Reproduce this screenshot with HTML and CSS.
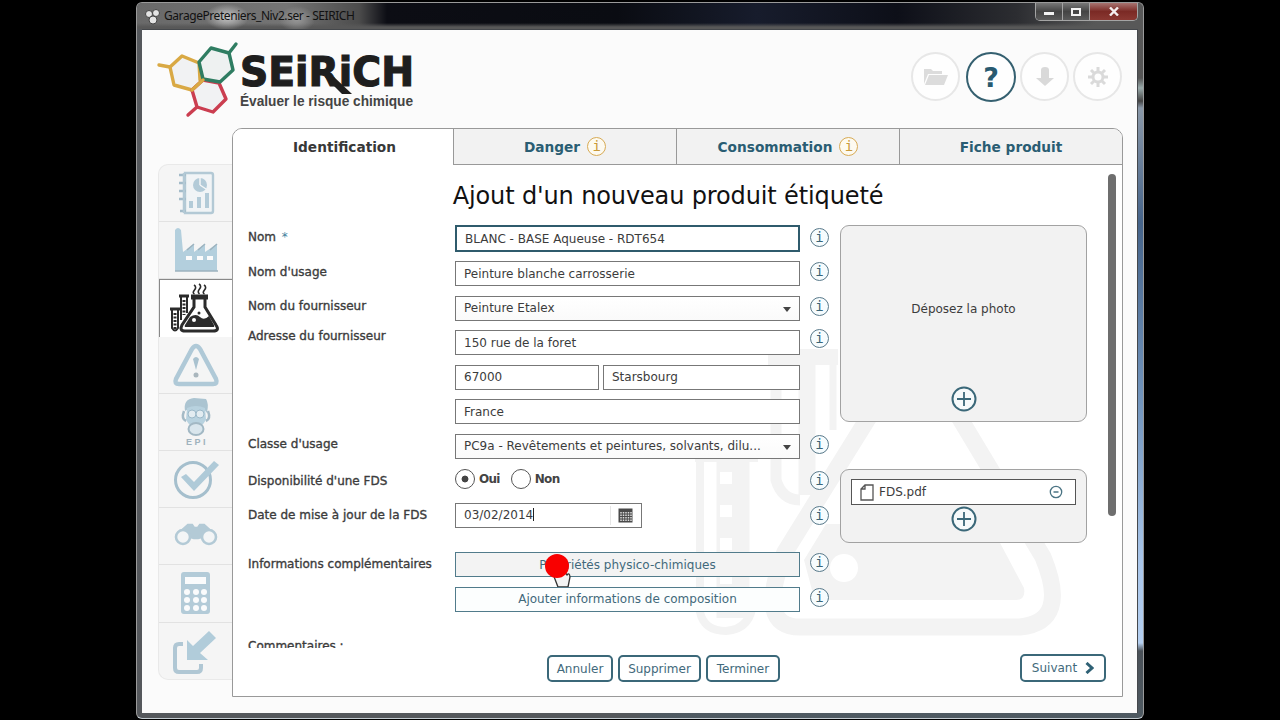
FILE: index.html
```html
<!DOCTYPE html>
<html lang="fr">
<head>
	<meta charset="UTF-8">
	<title>SEIRICH</title>
	<link rel="stylesheet" href="styles.css">
</head>
<body>

	<div class="window">
		<div class="titlebar">
			<svg class="appIcon" width="20" height="18" viewBox="0 0 20 18"><g fill="#e4e4e4" stroke="#444"><circle cx="6" cy="6" r="3.5"/><circle cx="13" cy="5" r="3.5"/><circle cx="10" cy="12" r="4"/></g></svg>
			<span class="caption">GaragePreteniers_Niv2.ser - SEIRICH</span>
			<div class="winBtns">
				<span class="min"><i></i></span>
				<span class="max"><i></i></span>
				<span class="close"><svg width="10" height="9" viewBox="0 0 10 9"><path d="M1 0.5L9 8.5M9 0.5L1 8.5" stroke="#f4eeee" stroke-width="2.4"/></svg></span>
			</div>
		</div>

		<div class="client">
			<header class="header">
				<svg class="logo" width="262" height="84" viewBox="156 38 262 84">
					<g fill="none" stroke-width="3.4" stroke-linejoin="round" stroke-linecap="round">
						<path d="M200 79L199 62L182 55L170 66L174 84L192 89L203 79" fill="#f1f2f3" stroke="#d9a944"/>
						<path d="M170 66L159 64" stroke="#d9a944"/>
						<path d="M192 89L203 79L219 82L226 98L213 111L197 106Z" fill="#f1f2f3" stroke="#cb3e50"/>
						<path d="M197 106L188 114" stroke="#cb3e50"/>
						<path d="M203 78L199 61L211 47L229 52L233 69L220 81Z" fill="#eef1f1" stroke="#2f7d62"/>
						<path d="M229 52L236 43" stroke="#2f7d62"/>
						<path d="M192 89L203 79" stroke="#d9a944"/>
					</g>
					<text class="logoName" x="240" y="84.500" textLength="174" lengthAdjust="spacingAndGlyphs">SEiRiCH</text>
					<path d="M325 76L334 76L352 93L342 93Z" fill="#1e1e1e"/>
					<text class="logoSub" x="240" y="105" textLength="173" lengthAdjust="spacingAndGlyphs">Évaluer le risque chimique</text>
				</svg>
				<div class="tools">
					<span class="tool off"><svg width="26" height="20" viewBox="0 0 26 20"><path d="M1 17V2H8L10 4H19V7H5L1 17ZM6 8H25L21 18H2Z" fill="#dcdcdc"/></svg></span>
					<span class="tool on">?</span>
					<span class="tool off"><svg width="22" height="22" viewBox="0 0 22 22"><path d="M7 4Q7 1 11 1T15 4V12H20L11 20L2 12H7Z" fill="#d9d9d9"/></svg></span>
					<span class="tool off"><svg width="22" height="22" viewBox="0 0 22 22"><g stroke="#dadada" fill="none"><circle cx="11" cy="11" r="5" stroke-width="3"/><path d="M11 1V5M11 17V21M1 11H5M17 11H21M4 4L7 7M15 15L18 18M18 4L15 7M7 15L4 18" stroke-width="3"/></g></svg></span>
				</div>
			</header>

			<div class="main">
				<ul class="side">
					<li><svg width="48" height="48" viewBox="0 0 48 48"><path d="M13 4H39Q41 4 41 6V42Q41 44 39 44H13Z" fill="#f1f4f6" stroke="#b3c9d5" stroke-width="2.400"/><path d="M7 6H14M7 14H14M7 22H14M7 30H14M8 42H14" stroke="#a3bbc9" stroke-width="2.500"/><path d="M12 4V44" stroke="#b3c9d5" stroke-width="2.500"/><circle cx="28" cy="16" r="7" fill="#b3cbd8"/><path d="M28 16V8M28 16L34 20" stroke="#f4f6f7" stroke-width="1.500"/><path d="M19 39V32M27 39V28M35 39V24" stroke="#b3cbd8" stroke-width="4"/></svg></li>
					<li><svg width="48" height="48" viewBox="0 0 48 48"><path d="M3 45V4Q6 0 9 4L11 26L22 18V26L33 18V26L45 18V45Z" fill="#b3cfdd"/><path d="M3 45H46M22 18L15 24M33 18L26 24M45 18L38 24" stroke="#9db3bf" stroke-width="1.600"/><path d="M14 30H20V34H14ZM25 30H31V34H25ZM35 30H41V34H35Z" fill="#fbfbfb"/></svg></li>
					<li class="current"><svg width="50" height="52" viewBox="0 0 50 52"><g fill="none" stroke="#2b2b2b"><path d="M24 3Q27 5 24.500 8T24.500 12M29 2Q32 4 29.500 7T29.500 12M34 3Q37 5 34.500 8T34.500 12" stroke-width="1.600"/><path d="M21 15H38" stroke-width="5"/><path d="M24 17V25L12 43Q9 49 15 49H43Q50 49 46 43L35 25V17" stroke-width="3"/><path d="M9 14H19" stroke-width="3"/><path d="M11 15V38M17 15V31" stroke-width="2"/><path d="M14 18V33" stroke-width="3" stroke-dasharray="2 1.500"/><path d="M0 27H10" stroke-width="3"/><path d="M2 28V46Q5 51 8 46V28" stroke-width="2"/><path d="M5 31V48" stroke-width="3" stroke-dasharray="2 1.500"/></g><path d="M20 35Q26 31 30 35T39 34L44 43Q45 45 43 45H16Q14 45 15 43Z" fill="#2b2b2b"/><circle cx="24" cy="38" r="2" fill="#fff"/><circle cx="29" cy="31" r="1.500" fill="#2b2b2b"/></svg></li>
					<li><svg width="48" height="48" viewBox="0 0 48 48"><path d="M24 5Q26 5 28 8L44 38Q46 43 41 43H7Q2 43 4 38L20 8Q22 5 24 5Z" fill="#f4f5f5" stroke="#afc9d7" stroke-width="4.500"/><path d="M21 18Q24 14 27 18L24 29Z" fill="#a9c2cf"/><circle cx="24" cy="34" r="2.500" fill="#a9b6bd"/></svg></li>
					<li><svg width="48" height="54" viewBox="0 0 48 54"><path d="M13 16Q11 4 22 3L34 4Q37 8 35 18L31 13H18Z" fill="#abc4d1"/><path d="M12 16Q9 24 14 26M36 16Q39 24 34 26" fill="none" stroke="#a4bac6" stroke-width="2.500"/><path d="M15 13Q24 9 33 13L34 25Q29 33 24 33T14 25Z" fill="#b8d2df"/><circle cx="20" cy="19" r="4" fill="#e2ecf1" stroke="#9cb9c9"/><circle cx="28" cy="19" r="4" fill="#e2ecf1" stroke="#9cb9c9"/><ellipse cx="24" cy="34" rx="7.500" ry="6" fill="#d9e6ed" stroke="#a2b8c4" stroke-width="2"/><text class="epi" x="14" y="50">EPI</text></svg></li>
					<li><svg width="48" height="48" viewBox="0 0 48 48"><circle cx="21" cy="25" r="17.500" fill="none" stroke="#a5bfcd" stroke-width="3"/><path d="M9 22L14 19L22 27L42 6L47 10L22 36Z" fill="#afcad8"/></svg></li>
					<li><svg width="48" height="48" viewBox="0 0 48 48"><g fill="#f3f5f6" stroke="#b3cad6" stroke-width="2.600"><path d="M6 22L16 13H20L22 16H26L28 13H32L42 22L26 26H22Z" fill="#b3cad6"/><circle cx="11" cy="25" r="7"/><circle cx="37" cy="25" r="7"/></g></svg></li>
					<li><svg width="48" height="48" viewBox="0 0 48 48"><rect x="9" y="3" width="29" height="42" rx="3" fill="#b3cbd8"/><path d="M13 8H34V15H13Z" fill="#fafbfc"/><g fill="#fafbfc"><circle cx="15" cy="23" r="3"/><circle cx="24" cy="23" r="3"/><circle cx="32" cy="23" r="3"/><circle cx="15" cy="31" r="3"/><circle cx="24" cy="31" r="3"/><circle cx="32" cy="31" r="3"/><circle cx="15" cy="39" r="3"/><circle cx="24" cy="39" r="3"/><circle cx="32" cy="39" r="3"/></g></svg></li>
					<li><svg width="48" height="48" viewBox="0 0 48 48"><path d="M11 17H7Q3 17 3 21V41Q3 45 7 45H25Q29 45 29 41V37" fill="none" stroke="#b0c7d4" stroke-width="4"/><path d="M15 13L21 19L37 4L44 11L28 26L36 33H15Z" fill="#b1ccda"/></svg></li>
				</ul>

				<div class="panel">
					<svg class="watermark" width="388" height="310" viewBox="690 340 388 310">
						<g fill="none" stroke="#f3f3f3">
							<path d="M872 412L785 552Q755 627 800 627H1020Q1070 622 1043 557L956 412" stroke-width="17"/>
							<path d="M768 357H838" stroke-width="16"/>
							<path d="M776 362V480Q782 500 800 500" stroke-width="11"/>
							<path d="M807 362V495" stroke-width="17"/>
							<path d="M833 362V430" stroke-width="7"/>
							<path d="M695 455H758" stroke-width="14"/>
							<path d="M700 458V612Q704 631 726 631Q752 629 753 600" stroke-width="8"/>
							<path d="M733 460V618" stroke-width="33"/>
							<path d="M720 478H732M720 511H732M720 544H732M720 578H732" stroke="#fff" stroke-width="12"/>
						</g>
						<path d="M826 524H990L1024 588Q1026 600 1016 600H824Q808 600 812 590L804 560Z" fill="#f3f3f3"/>
						<circle cx="844" cy="568" r="14" fill="#fff"/>
					</svg>

					<nav class="tabs">
						<a class="tab active">Identification</a>
						<a class="tab">Danger<span class="info gold">i</span></a>
						<a class="tab">Consommation<span class="info gold">i</span></a>
						<a class="tab">Fiche produit</a>
					</nav>

					<div class="scroll">
						<div class="form">
							<h1>Ajout d'un nouveau produit étiqueté</h1>
							<div class="cols">
								<div class="rows">
									<div class="row nom">
										<label>Nom <em>*</em></label>
										<input class="field focus" type="text" value="BLANC - BASE Aqueuse - RDT654">
										<span class="info">i</span>
									</div>
									<div class="row usage">
										<label>Nom d'usage</label>
										<input class="field" type="text" value="Peinture blanche carrosserie">
										<span class="info">i</span>
									</div>
									<div class="row fournisseur">
										<label>Nom du fournisseur</label>
										<div class="field select">Peinture Etalex</div>
										<span class="info">i</span>
									</div>
									<div class="row adresse">
										<label>Adresse du fournisseur</label>
										<div class="stack">
											<input class="field" type="text" value="150 rue de la foret">
											<div class="pair">
												<input class="field cp" type="text" value="67000">
												<input class="field ville" type="text" value="Starsbourg">
											</div>
											<input class="field" type="text" value="France">
										</div>
										<span class="info">i</span>
									</div>
									<div class="row classe">
										<label>Classe d'usage</label>
										<div class="field select">PC9a - Revêtements et peintures, solvants, dilu...</div>
										<span class="info">i</span>
									</div>
									<div class="row dispo">
										<label>Disponibilité d'une FDS</label>
										<div class="radios">
											<span class="radio checked"></span><b>Oui</b>
											<span class="radio"></span><b>Non</b>
										</div>
										<span class="info">i</span>
									</div>
									<div class="row date">
										<label>Date de mise à jour de la FDS</label>
										<div class="dateCell">
											<div class="field dateField">
												<span class="dateText">03/02/2014</span>
												<svg width="15" height="15" viewBox="0 0 15 15"><path d="M0.500 0.500H14.500V14.500H0.500Z" fill="#4a4a4a"/><path d="M3 4V13M5.500 4V13M8 4V13M10.500 4V13M13 4V13" stroke="#ddd" stroke-width="1.500" stroke-dasharray="1.500 1"/></svg>
											</div>
										</div>
										<span class="info">i</span>
									</div>
									<div class="row complement">
										<label>Informations complémentaires</label>
										<div class="stack">
											<button class="wide hover">Propriétés physico-chimiques
												<svg class="pointer" width="30" height="36" viewBox="0 0 30 36"><path d="M9 21L14 34H24L26 24Q25.500 19 23 22L20 18L15 20L11 18Z" fill="#f4f4f4" stroke="#333" stroke-width="1.300"/><circle cx="13" cy="13" r="12" fill="#f90000"/></svg>
											</button>
											<button class="wide">Ajouter informations de composition</button>
										</div>
										<div class="infos">
											<span class="info">i</span>
											<span class="info">i</span>
										</div>
									</div>
									<div class="row">
										<label>Commentaires :</label>
									</div>
								</div>

								<div class="docs">
									<div class="box photo">
										<span>Déposez la photo</span>
										<svg width="26" height="26" viewBox="0 0 26 26"><circle cx="13" cy="13" r="11.500" fill="#f6fafb" stroke="#3b6879" stroke-width="2"/><path d="M13 6V20M6 13H20" stroke="#3b6879" stroke-width="1.800"/></svg>
									</div>
									<div class="box fds">
										<div class="file">
											<svg width="14" height="17" viewBox="0 0 14 17"><path d="M5 1H13V16H1V5ZM5 1V5H1" fill="none" stroke="#555" stroke-width="1.300"/></svg>
											<span>FDS.pdf</span>
											<svg width="14" height="14" viewBox="0 0 14 14"><circle cx="7" cy="7" r="5.700" fill="none" stroke="#4b7484" stroke-width="1.300"/><path d="M4.500 7H9.500" stroke="#4b7484" stroke-width="1.500"/></svg>
										</div>
										<svg width="26" height="26" viewBox="0 0 26 26"><circle cx="13" cy="13" r="11.500" fill="#f6fafb" stroke="#3b6879" stroke-width="2"/><path d="M13 6V20M6 13H20" stroke="#3b6879" stroke-width="1.800"/></svg>
									</div>
								</div>
							</div>
						</div>
						<div class="bar"></div>
					</div>

					<div class="actions">
						<button class="btn annuler">Annuler</button>
						<button class="btn supprimer">Supprimer</button>
						<button class="btn terminer">Terminer</button>
						<button class="btn suivant">Suivant<svg width="9" height="12" viewBox="0 0 9 12"><path d="M1.500 1L7 6L1.500 11" fill="none" stroke="#2f6175" stroke-width="3"/></svg></button>
					</div>
				</div>
			</div>
		</div>
	</div>

</body>
</html>
```

FILE: styles.css
```css
* {padding: 0; margin: 0; box-sizing: border-box;}
li {list-style: none;}
body {height: 720px; overflow: hidden; background: #000; font: 12px/24px Verdana, "DejaVu Sans", sans-serif; color: #3c3c3c;}
input, button {font: inherit; color: inherit; outline: none; letter-spacing: inherit;}
svg {display: block;}

.window {width: 1008px; height: 717px; margin: 2px 0 0 136px; padding: 0 5px 6px; border: 1px solid #9a9a9a; border-bottom-color: #c4ccd2; border-radius: 6px; background: linear-gradient(to right, #55585c 0, #55585c 50%, transparent 50%), linear-gradient(#5a5a5a 0, #555 75px, #9aa 85px, #444 98px, #8a98a8 105px, #46648a 220px, #7295bd 400px, #a9c6ea 560px, #b4cff0 640px, #4a5158 648px, #4f5a62 100%);}
.titlebar {display: flex; height: 26px; margin: 0 -5px; padding-left: 6px; border-radius: 5px 5px 0 0; background: radial-gradient(ellipse 22px 13px at 90px 14px, #c8c8c8 0, rgba(200,200,200,0) 100%), radial-gradient(ellipse 18px 13px at 160px 16px, #999 0, rgba(150,150,150,0) 100%), linear-gradient(transparent 20px, #585858 24px), linear-gradient(to right, #696969 0, #747474 150px, #4c4c4c 222px, #0c0d14 250px, #0a0c12 480px, #171c2c 620px, #0d0f18 760px, #2c2d31 880px, #585858 960px);}
.appIcon {margin-top: 5px;}
.caption {flex: 1; padding-left: 1px; font: 12px/25px "Noto Sans", sans-serif; letter-spacing: -.43px; color: #111;}
.winBtns {display: flex; height: 18px; margin-right: 5px; border: 1px solid #a4a4a4; border-top: 0; border-radius: 0 0 5px 5px; overflow: hidden;}
.winBtns span {display: flex; align-items: center; justify-content: center; width: 27px; background: linear-gradient(#777, #444 50%, #5a5a5a); border-right: 1px solid #a4a4a4;}
.winBtns .close {width: 47px; border: 0; background: linear-gradient(#a77370, #7b2a25 50%, #8a3832);}
.min i {width: 10px; height: 3px; margin-top: 4px; background: #f2f2f2;}
.max i {width: 10px; height: 8px; border: 2px solid #f2f2f2;}

.client {height: 684px; border: 1px solid #45484c; border-width: 1px 1px 0 0; background: #fbfbfb;}
.header {display: flex; justify-content: space-between; height: 98px; padding: 9px 15px 0 14px;}
.logoName {font: bold 40px "DejaVu Sans", sans-serif; fill: #1e1e1e; stroke: #1e1e1e; stroke-width: 1.2px;}
.logoSub {font: bold 14px "Liberation Sans", sans-serif; fill: #444;}
.tools {display: flex; gap: 4px; padding-top: 13px;}
.tool {display: flex; align-items: center; justify-content: center; width: 49px; height: 49px; border: 2px solid #e7e7e7; border-radius: 50%; background: #fefefe;}
.tool.on {width: 50px; height: 50px; margin: 0 0 0 2px; border-color: #356070; font: bold 27px "DejaVu Sans", sans-serif; color: #285a70;}

.main {display: flex; padding: 0 14px 0 16px;}
.side {width: 74px; height: 516px; margin-top: 36px; border: 1px solid #e9e9e9; border-right: 0; border-radius: 10px 0 0 10px; background: #f5f5f5; overflow: hidden;}
.side li {display: flex; align-items: center; justify-content: center; height: 57.2px; border-bottom: 1px solid #e2e2e2;}
.side .current {background: #fff; border: 1px solid #888; border-width: 1px 0 0 1px;}
.side .current svg {margin-right: 2px;}
.epi {font: bold 9px "Liberation Sans", sans-serif; letter-spacing: 2.5px; fill: #9fb2bd;}

.panel {position: relative; flex: none; width: 891px; height: 569px; border: 1px solid #999; border-radius: 10px 10px 0 0; background: #fff; overflow: hidden;}
.watermark {position: absolute; left: 457px; top: 211px;}
.tabs {display: flex; height: 36px;}
.tab {display: flex; align-items: center; justify-content: center; flex: 0 0 223px; border: solid #999; border-width: 0 0 1px 1px; background: #f2f2f2; font-weight: bold; font-size: 13.7px; color: #2a5d73;}
.tab.active {flex-basis: 220px; padding-left: 3px; border: 0; background: #fff; color: #383838;}
.tab .info {margin-left: 7px;}

.info {flex: none; width: 19px; height: 19px; border: 1px solid #58798a; border-radius: 50%; background: #f6fcfe; font: 14px/17px "DejaVu Sans Mono", monospace; text-align: center; color: #3b6577;}
.info.gold {border-color: #d8ab55; background: #fdfaf0; color: #c99a3a;}

.scroll {position: relative; display: flex; height: 483px; overflow: hidden;}
.form {width: 875px; padding-left: 15px;}
h1 {width: 840px; height: 60px; padding-top: 1px; font: 24px/60px Verdana, "DejaVu Sans", sans-serif; letter-spacing: -.13px; text-align: center; color: #111;}
.bar {flex: none; width: 8px; height: 342px; margin-top: 9px; border-radius: 4px; background: #6e6e6e;}
.cols {display: flex;}
.rows {width: 592px;}
.row {display: flex; align-items: flex-start;}
label {width: 207px; -webkit-text-stroke: .35px #3c3c3c;}
label em {font-style: normal; color: #3f7f9c; -webkit-text-stroke: 0; margin-left: 2px;}
.field {display: block; width: 345px; height: 25px; padding: 0 8px; border: 1px solid #777; background: #fff; line-height: 23px;}
.field.focus {height: 27px; border: 2px solid #2f5b6c;}
.row > .info {margin-left: 10px;}
.select {position: relative; background: linear-gradient(#fff, #fafafa);}
.select:after {content: ""; position: absolute; right: 8px; top: 10px; border: 4.5px solid transparent; border-top: 5px solid #444; border-bottom: 0;}
.stack {display: flex; flex-direction: column; gap: 9.5px; width: 345px;}
.pair {display: flex; gap: 4px;}
.cp {width: 144px;}
.ville {width: 197px;}

.nom {height: 36px;}
.nom .info {margin-top: 3px;}
.usage {height: 35px;}
.usage label {margin-top: -1px;}
.fournisseur label, .classe label {margin-top: -2px;}
.usage .info, .fournisseur .info, .classe .info {margin-top: 1px;}
.fournisseur {height: 34px;}
.adresse {height: 104px;}
.adresse label {margin-top: -6px;}
.adresse .info {margin-top: -1px;}
.classe {height: 35px;}
.dispo {height: 34px;}
.dispo .info {margin-top: 2px;}
.date {height: 49px;}
.date .info {margin-top: 3px;}
.complement {height: 82px;}

.radios {display: flex; align-items: center; width: 345px; height: 20px; color: #444;}
.radios b {margin: 0 11px 0 4px; font-size: 12px; letter-spacing: -.7px;}
.radio {width: 20px; height: 20px; border: 1.5px solid #555; border-radius: 50%;}
.radio.checked {background: radial-gradient(#444 3px, #fff 3.8px);}
.dateCell {width: 345px;}
.dateField {display: flex; align-items: center; width: 187px; padding-right: 8px; justify-content: space-between;}
.dateText {width: 147px; border-right: 1px solid #e6e6e6; line-height: 19px;}
.dateText:after {content: ""; display: inline-block; height: 13px; border-right: 1px solid #222; vertical-align: -2px;}

.wide {position: relative; height: 25px; border: 1px solid #517b8b; background: #fcfefe; color: #42697b; line-height: 22px;}
.wide.hover {background: #f3f3f3;}
.pointer {position: absolute; left: 88px; top: 0;}
.infos {display: flex; flex-direction: column; gap: 16px; margin: 1px 0 0 10px;}

.docs {width: 247px;}
.box {display: flex; flex-direction: column; align-items: center; border: 1px solid #a2a2a2; border-radius: 9px; background: #f2f2f2;}
.photo {height: 197px; padding: 71px 0 9px; justify-content: space-between;}
.fds {height: 74px; margin-top: 47px; padding: 9px 10px;}
.file {display: flex; align-items: center; width: 225px; height: 26px; padding: 0 12px 0 8px; border: 1px solid #555; background: #fff; line-height: 22px;}
.file span {flex: 1; padding-left: 5px;}
.box > svg {flex: none; margin-left: 1px;}
.fds > svg {margin-top: 1px;}

.actions {display: flex; gap: 5px; padding: 7px 16px 0 314px;}
.btn {height: 27px; border: 2px solid #3b6879; border-radius: 5px; background: #fff; color: #42697b; line-height: 22px;}
.annuler {width: 66px;}
.supprimer {width: 83px;}
.terminer {width: 74px;}
.suivant {display: flex; align-items: center; justify-content: center; gap: 8px; width: 86px; height: 28px; margin: -1px 0 0 auto;}
```
